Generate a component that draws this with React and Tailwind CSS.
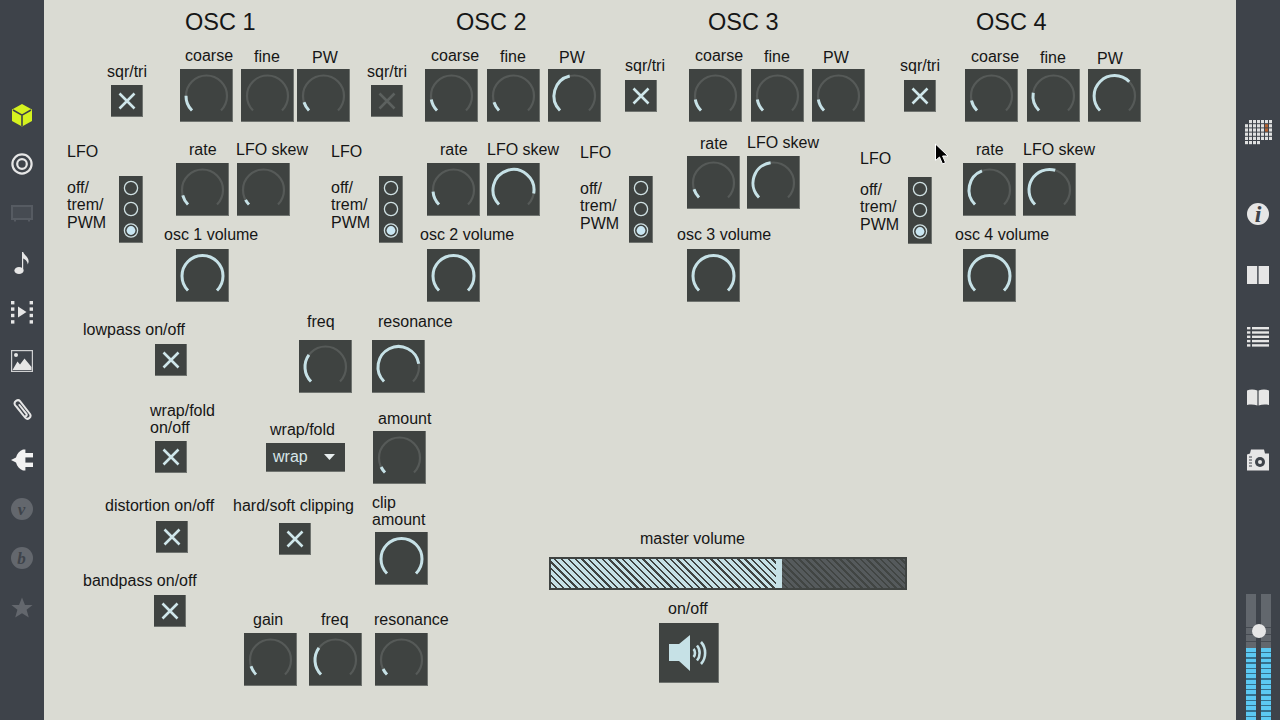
import React from "react";

const OX = 44;
const knobs = [
  [180,69,.17],[241,69,0],[297,69,.1],[176,163,.11],[237,163,.06],[176,249,1],
  [425,69,.13],[487,69,.1],[548,69,.45],[427,163,.15],[487,163,.87],[427,249,1],
  [689,69,.13],[751,69,.13],[812,69,.13],[687,156,.1],[747,156,.47],[687,249,1],
  [965,69,.12],[1027,69,.2],[1088,69,.67],[963,163,.42],[1023,163,.56],[963,249,1],
  [299,340,.3],[372,340,.8],[373,431,.07],[375,532,1],
  [244,633,.1],[309,633,.3],[375,633,.07],
];
const toggles = [
  [111,85,false],[371,85,true],[625,80,false],[904,80,false],
  [155,344,false],[155,441,false],[156,521,false],[279,523,false],[154,595,false],
];
const radios = [[119,176],[379,176],[629,176],[908,177]];
const heads = [["OSC 1",185],["OSC 2",456],["OSC 3",708],["OSC 4",976]];
const labels = [
  ["sqr/tri",107,71],["coarse",185,55],["fine",254,56],["PW",312,57],["LFO",67,151],["rate",189,149],["LFO skew",236,149],["osc 1 volume",164,234],
  ["sqr/tri",367,71],["coarse",431,55],["fine",500,56],["PW",559,57],["LFO",331,151],["rate",440,149],["LFO skew",487,149],["osc 2 volume",420,234],
  ["sqr/tri",625,65],["coarse",695,55],["fine",764,56],["PW",823,57],["LFO",580,152],["rate",700,143],["LFO skew",747,142],["osc 3 volume",677,234],
  ["sqr/tri",900,65],["coarse",971,56],["fine",1040,57],["PW",1097,58],["LFO",860,158],["rate",976,149],["LFO skew",1023,149],["osc 4 volume",955,234],
  ["lowpass on/off",83,329],["freq",307,321],["resonance",378,321],["wrap/fold",270,429],["amount",378,418],
  ["distortion on/off",105,505],["hard/soft clipping",233,505],["bandpass on/off",83,580],
  ["gain",253,619],["freq",321,619],["resonance",374,619],["master volume",640,538],["on/off",668,608],
];
const multi = [
  ["off/\ntrem/\nPWM",67,179],["off/\ntrem/\nPWM",331,179],["off/\ntrem/\nPWM",580,180],["off/\ntrem/\nPWM",860,181],
  ["wrap/fold\non/off",150,402],["clip\namount",372,494],
];

function polar(deg) {
  const a = (deg * Math.PI) / 180;
  return [26.5 + 20.5 * Math.sin(a), 27 - 20.5 * Math.cos(a)];
}
function arc(from, to) {
  const [x1, y1] = polar(from);
  const [x2, y2] = polar(to);
  const large = to - from > 180 ? 1 : 0;
  return `M${x1.toFixed(2)} ${y1.toFixed(2)}A20.5 20.5 0 ${large} 1 ${x2.toFixed(2)} ${y2.toFixed(2)}`;
}
function Knob({ x, y, v }) {
  const end = -135 + 270 * v;
  return (
    <div className="absolute w-[53px] h-[53px] bg-[#3f4341] border-r border-b border-[#6f736f]" style={{ left: x - OX, top: y }}>
      <svg width="52" height="52" viewBox="0 0 52 52" fill="none" strokeWidth="2.2">
        <path d={arc(-135, 135)} stroke="#565a58" />
        {v > 0 && <path d={arc(-135, end)} stroke="#c6e1e6" strokeWidth="3" />}
      </svg>
    </div>
  );
}
function Toggle({ x, y, dim }) {
  return (
    <div className="absolute w-[32px] h-[32px] bg-[#3f4341] border-r border-b border-[#6f736f] flex items-center justify-center" style={{ left: x - OX, top: y }}>
      <svg width="18" height="18" viewBox="0 0 18 18" stroke={dim ? "#5c615f" : "#cfe6ea"} strokeWidth="2.6">
        <path d="M1.5 1.5L16.5 16.5M16.5 1.5L1.5 16.5" />
      </svg>
    </div>
  );
}
function Radio({ x, y }) {
  return (
    <div className="absolute w-[24px] h-[67px] bg-[#3f4341] border-r border-b border-[#6f736f]" style={{ left: x - OX, top: y }}>
      <svg width="23" height="66" viewBox="0 0 23 66" fill="none" stroke="#cfe0e2" strokeWidth="1.3">
        <circle cx="12" cy="12" r="6.6" />
        <circle cx="12" cy="33" r="6.6" />
        <circle cx="12" cy="54.5" r="6.6" />
        <circle cx="12" cy="54.5" r="4.4" fill="#c9e6f2" stroke="none" />
      </svg>
    </div>
  );
}

const Cube = () => (
  <svg width="22" height="24" viewBox="0 0 22 24">
    <path d="M11 1L21 6.5V18L11 23.5L1 18V6.5Z" fill="#d5f21f" />
    <path d="M2 7L11 12.2L20 7M11 12.2V23" stroke="#3e434a" strokeWidth="1.6" fill="none" />
  </svg>
);
const Target = () => (
  <svg width="24" height="24" viewBox="0 0 24 24" fill="none" stroke="#e6e6e6">
    <circle cx="12" cy="12" r="9.6" strokeWidth="2.2" />
    <circle cx="12" cy="12" r="4.8" strokeWidth="2.2" />
  </svg>
);
const Rack = () => (
  <svg width="22" height="18" viewBox="0 0 22 18" fill="#464b52" stroke="#565b62" strokeWidth="2">
    <rect x="1" y="2" width="20" height="13" />
    <path d="M4 15v2.5M18 15v2.5" fill="none" />
  </svg>
);
const Note = () => (
  <svg width="18" height="24" viewBox="0 0 18 24" fill="#e6e6e6">
    <ellipse cx="6" cy="19.5" rx="4.6" ry="3.6" />
    <path d="M9 1h1.2c.5 3 5.8 4.6 5.4 10-.1 1-.6 1.8-1 2.4.2-3.4-2.8-5.4-4.4-6V19H9Z" />
  </svg>
);
const Film = () => (
  <svg width="22" height="24" viewBox="0 0 22 24" fill="#e6e6e6">
    {[0, 1, 2, 3].map((i) => (
      <g key={i}>
        <rect x="0" y={1 + i * 6.4} width="3.4" height="3.4" />
        <rect x="18.6" y={1 + i * 6.4} width="3.4" height="3.4" />
      </g>
    ))}
    <path d="M7 6.5L15.5 12L7 17.5Z" />
  </svg>
);
const Picture = () => (
  <svg width="22" height="22" viewBox="0 0 22 22">
    <rect x=".6" y=".6" width="20.8" height="20.8" fill="#3e434a" stroke="#cfd0d1" strokeWidth="1.2" />
    <circle cx="5" cy="5" r="2" fill="#e6e6e6" />
    <path d="M1.5 20L6.5 11.5L9 14.5L13.5 8.5L20.5 17V20Z" fill="#e6e6e6" />
  </svg>
);
const Clip = () => (
  <svg width="24" height="24" viewBox="0 0 24 24" fill="none" stroke="#e6e6e6" strokeWidth="2" strokeLinecap="round">
    <path d="M6.5 8.5L15 19.5C17.5 22.7 22 19.2 20 16L10 3.2C8 .8 3.2 3.4 5 7L13.8 18C15 19.5 17.6 17.6 16.4 15.8L9.4 7" />
  </svg>
);
const Plug = () => (
  <svg width="24" height="24" viewBox="0 0 24 24" fill="#f2f2f2">
    <path d="M1 12L6 9.5C7 5.8 9.6 2.6 13 1.5H15.4V22.5H13C9.6 21.4 7 18.2 6 14.5Z" />
    <rect x="15" y="5" width="8" height="4.4" />
    <rect x="15" y="14.6" width="8" height="4.4" />
  </svg>
);
const Letter = ({ c }) => (
  <div className="w-[22px] h-[22px] rounded-full bg-[#63676d] flex items-center justify-center text-[#3e434a] text-[17px] font-bold italic leading-none font-['Liberation_Serif',serif]">
    {c}
  </div>
);
const Star = () => (
  <svg width="22" height="22" viewBox="0 0 22 22" fill="#63676d">
    <path d="M11 .6L14 8H21.6L15.6 12.8L17.8 20.6L11 16.2L4.2 20.6L6.4 12.8L.4 8H8Z" />
  </svg>
);
const Grid = () => {
  const cells = [];
  for (let r = 0; r < 6; r++) {
    for (let c = 0; c < 7; c++) {
      if (r === 0 && c === 0) continue;
      if (r === 5 && c > 3) continue;
      const hot = c === 5 && (r === 1 || r === 2);
      cells.push(<rect key={`${r}-${c}`} x={c * 4} y={r * 4.2} width="3" height="3.2" fill={hot ? "#b5622f" : "#dfe0e0"} />);
    }
  }
  return <svg width="27" height="26" viewBox="0 0 27 26">{cells}</svg>;
};
const Info = () => (
  <div className="w-[22px] h-[22px] rounded-full bg-[#e6e6e6] flex items-center justify-center text-[#3e434a] text-[24px] font-bold italic leading-none font-['Liberation_Serif',serif]">
    i
  </div>
);
const Pair = () => (
  <svg width="22" height="18" viewBox="0 0 22 18" fill="#e6e6e6">
    <rect x="0" y="0" width="10.2" height="18" />
    <rect x="11.6" y="0" width="10.4" height="18" />
  </svg>
);
const Lines = () => (
  <svg width="22" height="21" viewBox="0 0 22 21" fill="#e6e6e6">
    {[0, 4.3, 8.6, 12.9, 17.2].map((y) => (
      <g key={y}>
        <rect x="0" y={y} width="3.4" height="2.4" />
        <rect x="5" y={y} width="17" height="2.4" />
      </g>
    ))}
  </svg>
);
const Book = () => (
  <svg width="22" height="17" viewBox="0 0 22 17" fill="#e6e6e6">
    <path d="M0 1.5C3 0 7 0 10.4 1.5V16.5C7 15.4 3 15.4 0 16Z" />
    <path d="M22 1.5C19 0 15 0 11.6 1.5V16.5C15 15.4 19 15.4 22 16Z" />
  </svg>
);
const Camera = () => (
  <svg width="22" height="22" viewBox="0 0 22 22">
    <path d="M0 5.5L3 4.5L4 .5H17L18 4.5H22V21.5H0Z" fill="#e6e6e6" />
    <circle cx="13" cy="13" r="5" fill="#3e434a" />
    <circle cx="13" cy="13" r="2" fill="#e6e6e6" />
    <path d="M2 8h3M2 11h3M2 14h3M2 17h3" stroke="#3e434a" strokeWidth="1.2" />
  </svg>
);

const leftIcons = [<Cube />, <Target />, <Rack />, <Note />, <Film />, <Picture />, <Clip />, <Plug />, <Letter c="v" />, <Letter c="b" />, <Star />];

function Bar() {
  return (
    <div className="flex flex-col w-[10px] h-full">
      <div className="h-[54px] bg-[#62676d] bg-[linear-gradient(transparent_33px,#464b52_33px,#464b52_34px,transparent_34px,transparent_40px,#464b52_40px,#464b52_41px,transparent_41px,transparent_47px,#464b52_47px,#464b52_48px,transparent_48px)]" />
      <div className="flex-1 bg-[repeating-linear-gradient(180deg,#5cc9f2_0px,#5cc9f2_3.9px,#35708c_3.9px,#35708c_5.3px)]" />
    </div>
  );
}

export default function App() {
  return (
    <div className="flex w-[1280px] h-[720px] overflow-hidden bg-[#dadbd3] text-[#161616] font-['Liberation_Sans',Arial,sans-serif]">
      <aside className="w-[44px] shrink-0 bg-[#3e434a] flex flex-col items-center pt-[90px]">
        {leftIcons.map((ic, i) => (
          <div key={i} className="h-[49.3px] w-full flex items-center justify-center pr-[1px]">{ic}</div>
        ))}
      </aside>

      <main className="relative flex-1">
        {heads.map(([t, x]) => (
          <div key={t} className="absolute top-[8px] text-[23.5px] leading-[28px] whitespace-pre" style={{ left: x - OX }}>{t}</div>
        ))}
        {labels.map(([t, x, y], i) => (
          <div key={i} className="absolute text-[16px] leading-[18px] whitespace-pre" style={{ left: x - OX, top: y - 8 }}>{t}</div>
        ))}
        {multi.map(([t, x, y], i) => (
          <div key={i} className="absolute text-[16px] leading-[17.25px] whitespace-pre-line" style={{ left: x - OX, top: y }}>{t}</div>
        ))}
        {knobs.map(([x, y, v], i) => <Knob key={i} x={x} y={y} v={v} />)}
        {toggles.map(([x, y, d], i) => <Toggle key={i} x={x} y={y} dim={d} />)}
        {radios.map(([x, y], i) => <Radio key={i} x={x} y={y} />)}

        <div className="absolute left-[222px] top-[443px] w-[79px] h-[29px] bg-[#3f4341] border-b border-[#6f736f] flex items-center justify-between pl-[7px] pr-[10px] text-[#d8e6e8] text-[16px]">
          <span>wrap</span>
          <svg width="11" height="6" viewBox="0 0 11 6" fill="#e8eeee"><path d="M0 0H11L5.5 6Z" /></svg>
        </div>

        <div className="absolute left-[505px] top-[557px] w-[358px] h-[33px] bg-[#3f4341] border-2 border-[#3f4341] flex">
          <div className="w-[225px] bg-[repeating-linear-gradient(45deg,#c6e1e6_0px,#c6e1e6_3.2px,#3f4341_3.2px,#3f4341_4.8px)]" />
          <div className="w-[6px] bg-[#c6e1e6]" />
          <div className="flex-1 bg-[repeating-linear-gradient(45deg,#555a5c_0px,#555a5c_3px,#414543_3px,#414543_4.8px)]" />
        </div>

        <div className="absolute left-[615px] top-[623px] w-[60px] h-[60px] bg-[#3f4341] border-r border-b border-[#6f736f] flex items-center justify-center">
          <svg width="40" height="40" viewBox="0 0 40 40" fill="none">
            <path d="M0 11H10L21 2V38L10 28H0Z" fill="#c6e1e6" />
            <path d="M24.5 16C26.5 18 26.5 22 24.5 24" stroke="#c6e1e6" strokeWidth="2.6" />
            <path d="M28 12.5C31.5 16.5 31.5 23.5 28 27.5" stroke="#c6e1e6" strokeWidth="2.6" />
            <path d="M32 9C37.5 15 37.5 25 32 31" stroke="#c6e1e6" strokeWidth="2.6" />
          </svg>
        </div>

        <svg className="absolute left-[890px] top-[143px]" width="16" height="24" viewBox="0 0 16 24">
          <path d="M1.5 1L1.5 17.5L5.5 14L8.5 21L11.5 19.6L8.6 13H14Z" fill="#000" stroke="#fff" strokeWidth="1" />
        </svg>
      </main>

      <aside className="w-[44px] shrink-0 bg-[#3e434a] flex flex-col items-center">
        <div className="h-[26px] mt-[120px] flex items-center justify-center"><Grid /></div>
        <div className="h-[22px] mt-[57px] flex items-center justify-center"><Info /></div>
        <div className="h-[18px] mt-[41px] flex items-center justify-center"><Pair /></div>
        <div className="h-[21px] mt-[43px] flex items-center justify-center"><Lines /></div>
        <div className="h-[17px] mt-[41px] flex items-center justify-center"><Book /></div>
        <div className="h-[22px] mt-[43px] flex items-center justify-center"><Camera /></div>
        <div className="relative mt-auto h-[126px] flex gap-[5px] pl-[1px]">
          <Bar />
          <Bar />
          <div className="absolute left-[7px] top-[30px] w-[14px] h-[14px] rounded-full bg-[#e6e6e6]" />
        </div>
      </aside>
    </div>
  );
}
